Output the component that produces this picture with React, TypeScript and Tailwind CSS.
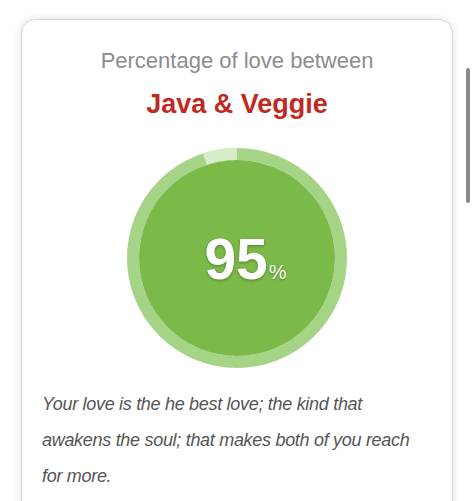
const score = 95;

function LoveMeter({ value }: { value: number }) {
  const r = 104;
  const circ = 2 * Math.PI * r;
  const rest = circ * (1 - value / 100);

  return (
    <div className="relative h-[220px] w-[220px]">
      <svg width="220" height="220" viewBox="0 0 220 220">
        <circle cx="110" cy="110" r={r} fill="none" stroke="#a6d487" strokeWidth="12" />
        {/* unfilled share of the ring, ending at 12 o'clock */}
        <circle
          cx="110"
          cy="110"
          r={r}
          fill="none"
          stroke="#d7ecc8"
          strokeWidth="12"
          strokeDasharray={`${rest} ${circ}`}
          transform="rotate(-90 110 110) rotate(-18 110 110)"
        />
        <circle cx="110" cy="110" r="98" fill="#7bb948" />
      </svg>
      <div className="absolute inset-0 flex items-center justify-center pl-[17px] pt-[2px]">
        <span className="text-[57px] leading-none font-bold text-white [text-shadow:0_1px_3px_rgba(0,0,0,0.35)]">
          {value}
        </span>
        <span className="mt-[26px] ml-[1px] text-[20px] leading-none text-white [text-shadow:0_1px_2px_rgba(0,0,0,0.3)]">
          %
        </span>
      </div>
    </div>
  );
}

export default function App() {
  return (
    <div className="relative h-[501px] overflow-hidden bg-white font-['Liberation_Sans',Arial,sans-serif]">
      <div className="ml-[21px] mt-[19px] w-[432px] rounded-t-[14px] border border-[#d8d8d8] bg-white px-[20px] pt-[27px] pb-10 shadow-[0_0_8px_rgba(0,0,0,0.12)]">
        <h2 className="text-center text-[22px] leading-[28px] text-[#8c8c8c]">
          Percentage of love between
        </h2>
        <h1 className="mt-[13px] text-center text-[27px] leading-[32px] font-bold text-[#c0291e]">
          Java &amp; Veggie
        </h1>
        <div className="mt-[28px] flex justify-center">
          <LoveMeter value={score} />
        </div>
        <p className="mt-[18px] pr-[10px] text-[18px] leading-[36px] italic tracking-[-0.3px] text-[#555555]">
          Your love is the he best love; the kind that awakens the soul; that makes both of you
          reach for more.
        </p>
      </div>
      <div className="fixed right-[4px] top-[68px] h-[135px] w-[4px] rounded-full bg-[#8a8a8a]" />
    </div>
  );
}
